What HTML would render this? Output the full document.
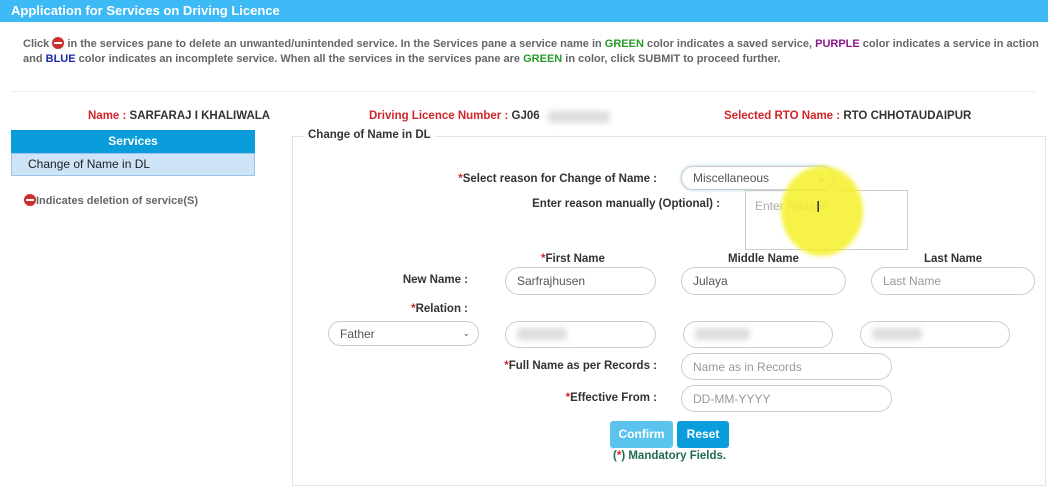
<!DOCTYPE html>
<html><head><meta charset="utf-8"><style>
*{box-sizing:border-box;margin:0;padding:0}
body{width:1048px;height:496px;background:#fff;font-family:"Liberation Sans",Arial,sans-serif;position:relative;overflow:hidden;color:#333}
.a{position:absolute;white-space:nowrap}
.b{font-weight:bold;font-size:11.5px}
.r{color:#d0252a}
.lbl{position:absolute;font-weight:bold;font-size:11.5px;color:#333;text-align:right;white-space:nowrap}
.inp{position:absolute;border:1px solid #ccc;border-radius:14px;background:#fff;font-size:12px;color:#555;padding-left:11px;display:flex;align-items:center}
.ph{color:#999}
.blur{position:absolute;height:12px;background:#ddd;filter:blur(3px);border-radius:4px}
.del{display:inline-block;width:12px;height:12px;border-radius:50%;background:#c9302c;position:relative;vertical-align:-2px}
.del:after{content:"";position:absolute;left:2px;right:2px;top:5px;height:2px;background:#fff}
</style></head><body>
<div class="a" style="left:0;top:0;width:1048px;height:22px;background:#3dbaf5"></div>
<div class="a" style="left:11px;top:3px;color:#fff;font-weight:bold;font-size:13px">Application for Services on Driving Licence</div>
<div class="a" style="left:23px;top:37px;font-size:11px;font-weight:bold;color:#666;line-height:15px">Click <span class="del"></span> in the services pane to delete an unwanted/unintended service. In the Services pane a service name in <span style="color:#2a9a2a">GREEN</span> color indicates a saved service, <span style="color:#8a1a8a">PURPLE</span> color indicates a service in action<br>and <span style="color:#1a2aa8">BLUE</span> color indicates an incomplete service. When all the services in the services pane are <span style="color:#2a9a2a">GREEN</span> in color, click SUBMIT to proceed further.</div>
<div class="a" style="left:11px;top:91px;width:1025px;height:1px;background:#eee"></div>
<div class="a b" style="left:88px;top:110px"><span class="r">Name : </span>SARFARAJ I KHALIWALA</div>
<div class="a b" style="left:369px;top:110px"><span class="r">Driving Licence Number : </span>GJ06</div>
<div class="blur" style="left:548px;top:111px;width:62px"></div>
<div class="a b" style="left:724px;top:110px"><span class="r">Selected RTO Name : </span>RTO CHHOTAUDAIPUR</div>
<div class="a" style="left:11px;top:130px;width:244px;height:23px;background:#0a9ddc;color:#fff;font-weight:bold;font-size:12px;text-align:center;line-height:23px">Services</div>
<div class="a" style="left:11px;top:153px;width:244px;height:23px;background:#cde3f7;border:1px solid #9bc4e8;font-size:12px;line-height:21px;padding-left:16px;color:#222">Change of Name in DL</div>
<div class="a" style="left:24px;top:194px;font-size:11px;font-weight:bold;color:#666"><span class="del"></span>Indicates deletion of service(S)</div>
<div class="a" style="left:292px;top:136px;width:754px;height:350px;border:1px solid #e3e3e3"></div>
<div class="a b" style="left:304px;top:129px;background:#fff;padding:0 4px;color:#333">Change of Name in DL</div>
<div class="lbl" style="right:391px;top:173px"><span class="r">*</span>Select reason for Change of Name :</div>
<div class="inp" style="left:681px;top:166px;width:153px;height:24px;box-shadow:0 0 3px #9cd">Miscellaneous<span style="position:absolute;right:8px;font-size:9px">&#8964;</span></div>
<div class="lbl" style="right:328px;top:198px">Enter reason manually (Optional) :</div>
<div class="a" style="left:745px;top:190px;width:163px;height:60px;border:1px solid #ccc;font-size:12px;color:#aaa;padding:8px 9px">Enter Reason</div>
<div class="a" style="left:781px;top:166px;width:82px;height:90px;border-radius:50%;background:rgba(245,240,40,.85);filter:blur(2px)"></div>
<div class="a" style="left:816px;top:199px;font-size:16px;color:#333">I</div>
<div class="lbl" style="left:541px;top:253px"><span class="r">*</span>First Name</div>
<div class="lbl" style="left:728px;top:253px">Middle Name</div>
<div class="lbl" style="left:924px;top:253px">Last Name</div>
<div class="lbl" style="right:580px;top:274px">New Name :</div>
<div class="inp" style="left:505px;top:267px;width:151px;height:28px">Sarfrajhusen</div>
<div class="inp" style="left:681px;top:267px;width:165px;height:28px">Julaya</div>
<div class="inp ph" style="left:871px;top:267px;width:164px;height:28px">Last Name</div>
<div class="lbl" style="right:580px;top:303px"><span class="r">*</span>Relation :</div>
<div class="inp" style="left:328px;top:321px;width:151px;height:25px">Father<span style="position:absolute;right:8px;font-size:9px">&#8964;</span></div>
<div class="inp" style="left:505px;top:321px;width:151px;height:27px"></div><div class="blur" style="left:517px;top:328px;width:50px"></div>
<div class="inp" style="left:683px;top:321px;width:150px;height:27px"></div><div class="blur" style="left:695px;top:328px;width:55px"></div>
<div class="inp" style="left:860px;top:321px;width:150px;height:27px"></div><div class="blur" style="left:872px;top:328px;width:50px"></div>
<div class="lbl" style="right:391px;top:360px"><span class="r">*</span>Full Name as per Records :</div>
<div class="inp ph" style="left:681px;top:353px;width:211px;height:27px">Name as in Records</div>
<div class="lbl" style="right:391px;top:392px"><span class="r">*</span>Effective From :</div>
<div class="inp ph" style="left:681px;top:385px;width:211px;height:27px">DD-MM-YYYY</div>
<div class="a" style="left:610px;top:421px;width:63px;height:27px;background:#5bc4ee;border-radius:3px;color:#fff;font-weight:bold;font-size:12px;text-align:center;line-height:27px">Confirm</div>
<div class="a" style="left:677px;top:421px;width:52px;height:27px;background:#0a9ddc;border-radius:3px;color:#fff;font-weight:bold;font-size:12px;text-align:center;line-height:27px">Reset</div>
<div class="a b" style="left:613px;top:450px;color:#1f6b4f">(<span class="r">*</span>) Mandatory Fields.</div>
</body></html>
